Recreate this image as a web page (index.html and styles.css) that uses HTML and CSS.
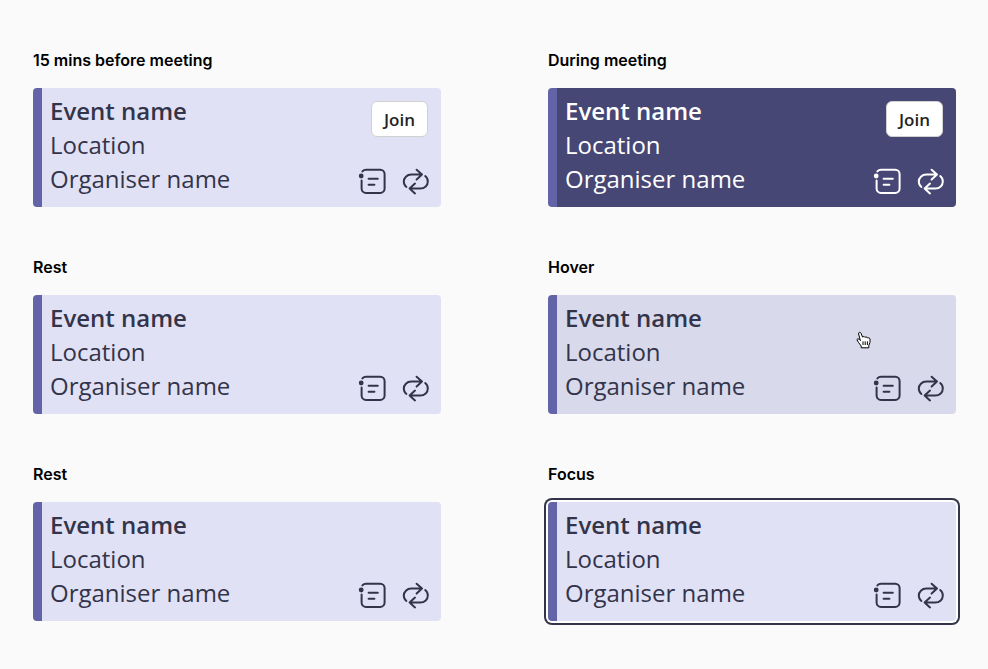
FILE: index.html
```html
<!DOCTYPE html>
<html lang="en">
<head>
  <meta charset="UTF-8">
  <title>Event card states</title>
  <meta name="viewport" content="width=device-width, initial-scale=1.0">
  <link rel="stylesheet" href="styles.css">
</head>
<body>

  <!-- shared icons -->
  <svg class="sprite" aria-hidden="true">
    <symbol id="icon-agenda" viewBox="0 0 28 28">
      <path d="M4.4 3.4C5.4 2.2 6.6 1.7 8 1.7H22.2A4.4 4.4 0 0 1 26.6 6.1V20.5A4.4 4.4 0 0 1 22.2 24.9H8A4.4 4.4 0 0 1 3.6 20.5V12.4"/>
      <path d="M10.6 10.8H19.8M10.6 16.8H16.4"/>
      <circle cx="3.2" cy="8" r="2.4"/>
    </symbol>
    <symbol id="icon-repeat" viewBox="0 0 28 28">
      <path d="M14.6 1.7L20 6.6L14.6 11.6M20 6.6H9.4C4.8 6.6 1.8 9.8 1.8 13.6C1.8 16 2.8 17.8 4.4 19"/>
      <path d="M13 15.6L7.6 20.6L13 25.4M7.6 20.6H18.2C22.8 20.6 25.8 17.2 25.8 13.4C25.8 11 24.8 9.2 23.2 8"/>
    </symbol>
  </svg>

  <main class="states">
    <section class="state">
      <h2>15 mins before meeting</h2>
      <article class="card">
        <div class="details">
          <h3>Event name</h3>
          <p>Location</p>
          <p>Organiser name</p>
        </div>
        <div class="side">
          <button type="button" class="join">Join</button>
          <div class="icons">
            <svg><use href="#icon-agenda"/></svg>
            <svg><use href="#icon-repeat"/></svg>
          </div>
        </div>
      </article>
    </section>

    <section class="state">
      <h2>During meeting</h2>
      <article class="card active">
        <div class="details">
          <h3>Event name</h3>
          <p>Location</p>
          <p>Organiser name</p>
        </div>
        <div class="side">
          <button type="button" class="join">Join</button>
          <div class="icons">
            <svg><use href="#icon-agenda"/></svg>
            <svg><use href="#icon-repeat"/></svg>
          </div>
        </div>
      </article>
    </section>

    <section class="state">
      <h2>Rest</h2>
      <article class="card">
        <div class="details">
          <h3>Event name</h3>
          <p>Location</p>
          <p>Organiser name</p>
        </div>
        <div class="side">
          <div class="icons">
            <svg><use href="#icon-agenda"/></svg>
            <svg><use href="#icon-repeat"/></svg>
          </div>
        </div>
      </article>
    </section>

    <section class="state">
      <h2>Hover</h2>
      <article class="card hover">
        <div class="details">
          <h3>Event name</h3>
          <p>Location</p>
          <p>Organiser name</p>
        </div>
        <div class="side">
          <div class="icons">
            <svg><use href="#icon-agenda"/></svg>
            <svg><use href="#icon-repeat"/></svg>
          </div>
        </div>
        <svg class="pointer" viewBox="0 0 16 18" aria-hidden="true">
          <path d="M5.2 16.8V15L2.6 11.6L1 9C.8 8 2 7.4 3 8.2L4.4 9.6L2.6 3C2.2 1.2 4.4.6 5 2.2L6.6 6.2C7 5.2 8.6 5.4 9 6.4C9.6 5.6 11 5.8 11.4 7C12.2 6.4 13.8 6.8 14 8V11.4L12.8 14.4V16.8Z"/>
          <path d="M7 10.4V14M9.2 10.4V14M11.4 10.4V14"/>
        </svg>
      </article>
    </section>

    <section class="state">
      <h2>Rest</h2>
      <article class="card">
        <div class="details">
          <h3>Event name</h3>
          <p>Location</p>
          <p>Organiser name</p>
        </div>
        <div class="side">
          <div class="icons">
            <svg><use href="#icon-agenda"/></svg>
            <svg><use href="#icon-repeat"/></svg>
          </div>
        </div>
      </article>
    </section>

    <section class="state">
      <h2>Focus</h2>
      <article class="card focus">
        <div class="details">
          <h3>Event name</h3>
          <p>Location</p>
          <p>Organiser name</p>
        </div>
        <div class="side">
          <div class="icons">
            <svg><use href="#icon-agenda"/></svg>
            <svg><use href="#icon-repeat"/></svg>
          </div>
        </div>
      </article>
    </section>
  </main>

</body>
</html>
```
FILE: styles.css
```css
:root {
  --page-bg: #fafafa;
  --card-bg: #e1e1f6;
  --card-hover: #d8d9ea;
  --card-active: #464775;
  --accent: #6264a7;
  --text-color: #33344a;
}

* {
  box-sizing: border-box;
}

body {
  margin: 0;
  background-color: var(--page-bg);
  color: var(--text-color);
  font-family: 'Segoe UI', 'Open Sans', 'Noto Sans', sans-serif;
}

h2, h3, p {
  margin: 0;
}

.sprite {
  position: absolute;
  width: 0;
  height: 0;
}

.states {
  display: grid;
  grid-template-columns: repeat(2, 1fr);
  gap: 50px 107px;
  padding: 50px 32px 48px 33px;
}

.state h2 {
  margin-bottom: 18px;
  font-family: Inter, sans-serif;
  font-size: 16px;
  font-weight: 600;
  line-height: 20px;
  color: #000;
}

.card {
  position: relative;
  display: flex;
  justify-content: space-between;
  padding: 6px 11px 11px 8px;
  border-left: 9px solid var(--accent);
  border-radius: 4px;
  background-color: var(--card-bg);
}

.details {
  font-size: 24px;
  line-height: 34px;
}

.details h3 {
  font-size: 24px;
  font-weight: 600;
}

.side {
  display: flex;
  flex-direction: column;
  align-items: flex-end;
  padding-top: 7px;
}

.join {
  height: 36px;
  margin-right: 2px;
  padding: 0 12px;
  border: 1px solid #d1d1d1;
  border-radius: 6px;
  background-color: #fff;
  color: #242424;
  font-family: inherit;
  font-size: 17px;
  font-weight: 600;
  cursor: pointer;
}

.icons {
  display: flex;
  gap: 16px;
  margin-top: auto;
}

.icons svg {
  width: 28px;
  height: 28px;
  fill: none;
  stroke: currentColor;
  stroke-width: 2;
  stroke-linecap: round;
  stroke-linejoin: round;
}

#icon-agenda circle {
  fill: currentColor;
  stroke: none;
}

.active {
  background-color: var(--card-active);
  color: #fff;
}

.hover {
  background-color: var(--card-hover);
}

.focus {
  box-shadow: 0 0 0 2px #fff, 0 0 0 4px var(--text-color);
}

.pointer {
  position: absolute;
  top: 30%;
  right: 21%;
  width: 16px;
  height: 18px;
  fill: #fff;
  stroke: #000;
  stroke-width: 1;
  stroke-linejoin: round;
}

@media (max-width: 760px) {
  .states {
    grid-template-columns: 1fr;
  }
}
```
